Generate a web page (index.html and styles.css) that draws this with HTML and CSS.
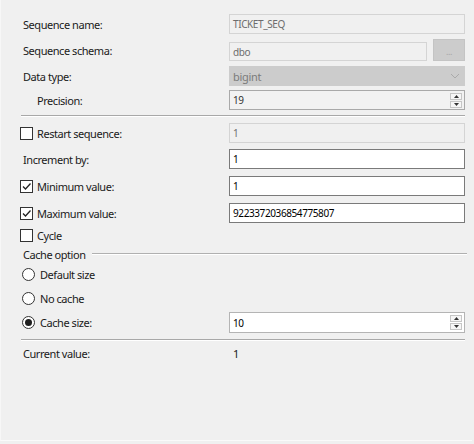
FILE: index.html
```html
<!DOCTYPE html>
<html>
<head>
<meta charset="utf-8">
<link rel="stylesheet" href="styles.css">
</head>
<body>
<div class="panel">
  <div class="row r-name">
    <div class="label">Sequence name:</div>
    <div class="ctl"><div class="box disabled">TICKET_SEQ</div></div>
  </div>
  <div class="row r-schema">
    <div class="label">Sequence schema:</div>
    <div class="ctl schema-ctl">
      <div class="box disabled schema-box">dbo</div>
      <div class="dots-btn">...</div>
    </div>
  </div>
  <div class="row r-type">
    <div class="label">Data type:</div>
    <div class="ctl"><div class="box combo"><span>bigint</span>
      <svg class="chev" width="10" height="6" viewBox="0 0 10 6"><path d="M1 1 L5 5 L9 1" fill="none" stroke="#aaaaaa" stroke-width="1"/></svg></div></div>
  </div>
  <div class="row r-prec">
    <div class="label indent">Precision:</div>
    <div class="ctl"><div class="box spin prec"><span>19</span>
      <div class="spinbtns">
        <div class="sb"><svg width="7" height="4" viewBox="0 0 7 4"><path d="M0 4 L3.5 0 L7 4Z" fill="#333"/></svg></div>
        <div class="sb"><svg width="7" height="4" viewBox="0 0 7 4"><path d="M0 0 L3.5 4 L7 0Z" fill="#333"/></svg></div>
      </div></div></div>
  </div>
  <div class="sep sep1"></div>
  <div class="row r-restart">
    <div class="label chk"><span class="cb"></span>Restart sequence:</div>
    <div class="ctl"><div class="box disabled">1</div></div>
  </div>
  <div class="row r-inc">
    <div class="label">Increment by:</div>
    <div class="ctl"><div class="box enabled">1</div></div>
  </div>
  <div class="row r-min">
    <div class="label chk"><span class="cb"><svg width="11" height="11" viewBox="0 0 11 11"><path d="M2 5.5 L4.5 8 L9.5 2.5" fill="none" stroke="#222" stroke-width="1.3"/></svg></span>Minimum value:</div>
    <div class="ctl"><div class="box enabled">1</div></div>
  </div>
  <div class="row r-max">
    <div class="label chk"><span class="cb"><svg width="11" height="11" viewBox="0 0 11 11"><path d="M2 5.5 L4.5 8 L9.5 2.5" fill="none" stroke="#222" stroke-width="1.3"/></svg></span>Maximum value:</div>
    <div class="ctl"><div class="box enabled">9223372036854775807</div></div>
  </div>
  <div class="row r-cycle">
    <div class="label chk"><span class="cb"></span>Cycle</div>
  </div>
  <div class="row r-cacheopt">
    <div class="group-title">Cache option</div>
    <div class="group-line"></div>
  </div>
  <div class="row r-default">
    <div class="label rad"><span class="rb"></span>Default size</div>
  </div>
  <div class="row r-nocache">
    <div class="label rad"><span class="rb"></span>No cache</div>
  </div>
  <div class="row r-cachesize">
    <div class="label rad"><span class="rb on"><span class="dot"></span></span>Cache size:</div>
    <div class="ctl"><div class="box spin cache"><span>10</span>
      <div class="spinbtns">
        <div class="sb"><svg width="7" height="4" viewBox="0 0 7 4"><path d="M0 4 L3.5 0 L7 4Z" fill="#333"/></svg></div>
        <div class="sb"><svg width="7" height="4" viewBox="0 0 7 4"><path d="M0 0 L3.5 4 L7 0Z" fill="#333"/></svg></div>
      </div></div></div>
  </div>
  <div class="sep sep2"></div>
  <div class="row r-current">
    <div class="label">Current value:</div>
    <div class="ctl"><span class="plain">1</span></div>
  </div>
</div>
</body>
</html>
```

FILE: styles.css
```css
html, body {
  margin: 0;
  padding: 0;
  background: #f0f0f0;
}
body {
  font-family: "Noto Sans", sans-serif;
  font-size: 11px;
  letter-spacing: -0.45px;
  color: #1a1a1a;
}
.panel {
  width: 472px;
  height: 441px;
  box-sizing: border-box;
  border-left: 1px solid #f7f7f7;
  border-bottom: 1px solid #fafafa;
  padding: 14px 0 0 19px;
  display: flex;
  flex-direction: column;
}
.row {
  display: flex;
  align-items: center;
  height: 20px;
}
.label {
  width: 209px;
  box-sizing: border-box;
  padding-left: 3px;
  display: flex;
  align-items: center;
  white-space: nowrap;
}
.label.indent { padding-left: 17px; }
.label.chk { padding-left: 0; }
.label.rad { padding-left: 2px; }
.ctl {
  width: 236px;
  display: flex;
  align-items: center;
}
.box {
  box-sizing: border-box;
  width: 236px;
  height: 20px;
  border: 1px solid #d4d4d4;
  padding-left: 3px;
  display: flex;
  align-items: center;
  font-size: 10px;
  letter-spacing: -0.4px;
}
.box.disabled { background: #f0f0f0; color: #6d6d6d; }
.box.enabled { background: #ffffff; border-color: #7a7a7a; color: #000; }
.box.combo {
  background: #cccccc;
  border-color: #cccccc;
  color: #7b7b7b;
  justify-content: space-between;
  padding-right: 4px;
  font-size: 11px;
  letter-spacing: -0.3px;
}
.box.spin { justify-content: space-between; padding-right: 2px; }
.box.prec { background: #f2f2f2; border-color: #a9a9a9; color: #333; }
.box.cache { background: #ffffff; border-color: #b4b4b4; color: #000; height: 21px; }
.spinbtns {
  display: flex;
  flex-direction: column;
  gap: 1px;
}
.sb {
  width: 12px;
  height: 7px;
  box-sizing: border-box;
  border: 1px solid #c6c6c6;
  background: #f6f6f6;
  display: flex;
  align-items: center;
  justify-content: center;
}
.sb svg { display: block; width: 5px; height: 3px; }
.r-schema { margin-top: 5px; height: 22px; }
.schema-ctl { justify-content: space-between; align-items: flex-end; height: 22px; }
.schema-box { width: 198px; height: 19px; }
.dots-btn {
  width: 32px;
  height: 22px;
  box-sizing: border-box;
  background: #cccccc;
  border: 1px solid #c4c4c4;
  color: #a6a6a6;
  font-size: 9px;
  display: flex;
  align-items: center;
  justify-content: center;
  padding-top: 3px;
}
.r-type { margin-top: 5px; }
.r-prec { margin-top: 4px; }
.sep {
  margin-left: 1px;
  width: 444px;
  height: 0;
  border-top: 1px solid #a8a8a8;
  border-bottom: 1px solid #ffffff;
}
.sep1 { margin-top: 5px; }
.r-restart { margin-top: 6px; }
.r-inc { margin-top: 6px; }
.r-min { margin-top: 7px; }
.r-max { margin-top: 7px; }
.r-cycle { margin-top: 3px; height: 18px; }
.r-cacheopt { margin-top: 1px; height: 18px; }
.r-default { margin-top: 2px; height: 18px; }
.r-nocache { margin-top: 6px; height: 18px; }
.r-cachesize { margin-top: 5px; height: 21px; }
.sep2 { margin-top: 6px; }
.r-current { margin-top: 3px; height: 18px; }
.cb {
  width: 13px;
  height: 13px;
  box-sizing: border-box;
  border: 1px solid #333333;
  background: #ffffff;
  margin-right: 4px;
  display: flex;
  align-items: center;
  justify-content: center;
  flex: none;
}
.cb svg { display: block; }
.rb {
  width: 13px;
  height: 13px;
  box-sizing: border-box;
  border: 1px solid #333333;
  border-radius: 50%;
  background: #ffffff;
  margin-right: 5px;
  display: flex;
  align-items: center;
  justify-content: center;
  flex: none;
}
.rb .dot {
  width: 7px;
  height: 7px;
  border-radius: 50%;
  background: #1e1e1e;
}
.group-title {
  padding-left: 3px;
  white-space: nowrap;
}
.group-line {
  margin-left: 6px;
  width: 375px;
  height: 0;
  border-top: 1px solid #b0b0b0;
  border-bottom: 1px solid #ffffff;
}
.plain { padding-left: 4px; }
```
